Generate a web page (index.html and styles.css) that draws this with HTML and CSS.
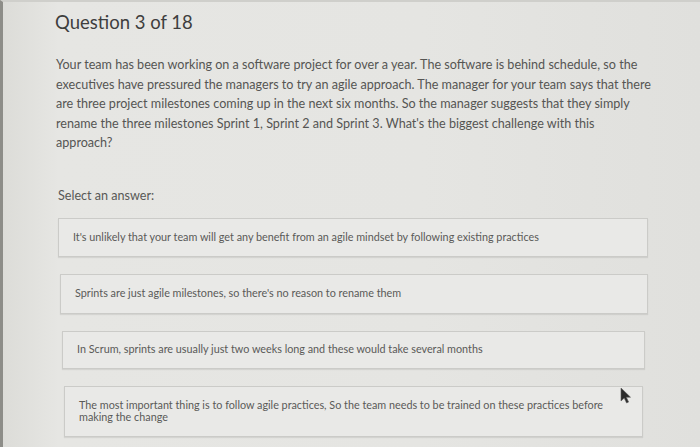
FILE: index.html
```html
<!DOCTYPE html>
<html lang="en">
<head>
<meta charset="utf-8">
<title>Question 3 of 18</title>
<link rel="stylesheet" href="styles.css">
</head>
<body>
<div class="screen">
  <main class="quiz">
    <h1 class="title">Question 3 of 18</h1>
    <p class="question">Your team has been working on a software project for over a year. The software is behind schedule, so the executives have pressured the managers to try an agile approach. The manager for your team says that there are three project milestones coming up in the next six months. So the manager suggests that they simply rename the three milestones Sprint 1, Sprint 2 and Sprint 3. What's the biggest challenge with this approach?</p>
    <p class="prompt">Select an answer:</p>
    <div class="answers">
      <div class="answer a1">It's unlikely that your team will get any benefit from an agile mindset by following existing practices</div>
      <div class="answer a2">Sprints are just agile milestones, so there's no reason to rename them</div>
      <div class="answer a3">In Scrum, sprints are usually just two weeks long and these would take several months</div>
      <div class="answer a4">The most important thing is to follow agile practices, So the team needs to be trained on these practices before making the change
        <svg class="cursor" width="12" height="17" viewBox="0 0 12 17"><path d="M1 1 L1 14 L4.2 11 L6.6 16 L8.6 15 L6.3 10.2 L10.5 10.2 Z" fill="#2b2b2b" stroke="#5a5a5a" stroke-width="0.6"/></svg>
      </div>
    </div>
  </main>
</div>
</body>
</html>
```

FILE: styles.css
```css
html, body {
  margin: 0;
  padding: 0;
}
body {
  width: 700px;
  height: 447px;
  overflow: hidden;
  background: #e2e2df;
  font-family: Lato, "Open Sans", sans-serif;
  color: #4a4a4a;
}
.screen {
  height: 447px;
  box-sizing: border-box;
  border-left: 3px solid #8d8d88;
  border-top: 2px solid #cfcfcb;
  background: linear-gradient(90deg, #dcdcd8 0%, #e6e6e3 8%, #e5e5e2 60%, #e0e0dd 100%);
}
.quiz {
  padding: 7px 0 0 52px;
  width: 610px;
}
.title {
  margin: 0;
  font-weight: 400;
  font-size: 18.5px;
  line-height: 26px;
  color: #3e3e3e;
}
.question {
  margin: 20px 0 0 1px;
  font-size: 12.6px;
  line-height: 19.5px;
  color: #555553;
  width: 597px;
}
.prompt {
  margin: 34px 0 0 3px;
  font-size: 12.6px;
  line-height: 18px;
  color: #585856;
}
.answers {
  margin-top: 13px;
  display: flex;
  flex-direction: column;
  gap: 17px;
}
.answer {
  position: relative;
  box-sizing: border-box;
  width: 590px;
  margin-left: 3px;
  padding: 0 14px;
  min-height: 39px;
  display: flex;
  align-items: center;
  background: #e9e9e7;
  border: 1px solid #cbcbc8;
  box-shadow: 0 1px 1px rgba(0,0,0,0.08);
  font-size: 10.8px;
  line-height: 12.5px;
  color: #5a5a58;
}
.a2 { margin-left: 5px; width: 588px; min-height: 40px; }
.a3 { margin-left: 7px; width: 583px; min-height: 38px; }
.a4 { margin-left: 9px; width: 579px; min-height: 51px; padding-right: 30px; }
.cursor {
  position: absolute;
  right: 10px;
  top: 0;
}
```
